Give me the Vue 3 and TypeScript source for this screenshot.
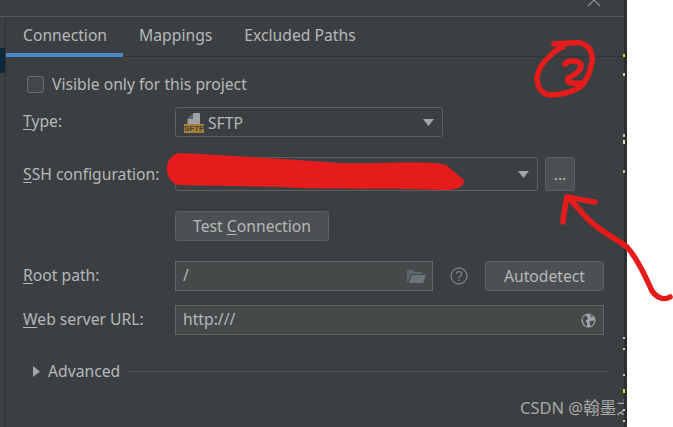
<script setup lang="ts">
const tabs: string[] = ['Connection', 'Mappings', 'Excluded Paths']
const edgeDots: { y: number; h: number; color: string }[] = [
  { y: 54, h: 3, color: '#d8d820' },
  { y: 73, h: 3, color: '#d4d4a0' },
  { y: 134, h: 3, color: '#c8c8a0' },
  { y: 140, h: 4, color: '#dcdcb0' },
  { y: 170, h: 3, color: '#c8c8a0' },
  { y: 337, h: 2, color: '#c8c8a0' },
  { y: 348, h: 2, color: '#d4d4a0' },
  { y: 374, h: 2, color: '#c8c8a0' },
  { y: 389, h: 4, color: '#d8d840' },
  { y: 409, h: 2, color: '#d4d4a0' },
  { y: 420, h: 2, color: '#d4d4a0' },
]
</script>

<template>
  <div class="page">
    <div class="dialog">
      <div class="titlebar">
        <svg class="close" width="14" height="8" viewBox="0 0 14 8">
          <path d="M1 -6 L13 6 M13 -6 L1 6" stroke="#8f9193" stroke-width="1.2" fill="none" />
        </svg>
      </div>
      <div class="main">
        <div class="strip"><div class="strip-sel"></div></div>
        <div class="panel">
          <div class="tabs">
            <div v-for="(t, i) in tabs" :key="t" class="tab" :class="{ active: i === 0 }">{{ t }}</div>
          </div>
          <div class="form">
            <label class="check"><span class="box"></span>Visible only for this project</label>

            <div class="row row-type">
              <div class="label"><u>T</u>ype:</div>
              <div class="combo combo-type">
                <svg class="sftp-doc" width="13" height="11" viewBox="0 0 13 11">
                  <path d="M0.5 11 V6 L7 0 H13 V11 Z" fill="#9ea2a6" />
                  <path d="M1 6 L6 1 V6 Z" fill="#5f6265" />
                </svg>
                <span class="sftp-tag">SFTP</span>
                <span class="combo-text">SFTP</span>
                <svg class="caret" width="11" height="7" viewBox="0 0 11 7"><path d="M0 0 H11 L5.5 7 Z" fill="#a3a5a7" /></svg>
              </div>
            </div>

            <div class="row row-ssh">
              <div class="label label-ssh"><u>S</u>SH configuration:</div>
              <div class="combo combo-ssh">
                <svg class="caret" width="11" height="7" viewBox="0 0 11 7"><path d="M0 0 H11 L5.5 7 Z" fill="#a3a5a7" /></svg>
              </div>
              <button class="btn dots">...</button>
            </div>

            <div class="row row-test">
              <button class="btn test">Test <u>C</u>onnection</button>
            </div>

            <div class="row row-root">
              <div class="label"><u>R</u>oot path:</div>
              <div class="input input-root">
                <span class="value">/</span>
                <svg width="20" height="16" viewBox="0 0 20 16">
                  <path d="M1 14 V2 H7 L9 4 H16 V6 H5 L2 14 Z" fill="#5f6a70" />
                  <path d="M3 15 L6 7 H20 L17 15 Z" fill="#6f7a80" />
                </svg>
              </div>
              <svg class="help" width="18" height="18" viewBox="0 0 18 18">
                <circle cx="9" cy="9" r="8" fill="none" stroke="#7c7f82" stroke-width="1.3" />
                <path d="M6.3 7 C6.3 3.8 11.8 3.8 11.8 7 C11.8 9 9 9 9 11" fill="none" stroke="#7c7f82" stroke-width="1.4" />
                <rect x="8.2" y="12.3" width="1.6" height="1.7" fill="#7c7f82" />
              </svg>
              <button class="btn auto">Autodetect</button>
            </div>

            <div class="row row-web">
              <div class="label"><u>W</u>eb server URL:</div>
              <div class="input input-web">
                <span class="value">http:///</span>
                <svg width="15" height="15" viewBox="0 0 15 15">
                  <circle cx="7.5" cy="7.5" r="7" fill="#a3a6a8" />
                  <path d="M1.5 5 L5 2 L7 5.5 L4.5 8 L6.5 11 L5.5 13.5 L2.5 10.5 Z M8.5 8 L13.5 7.5 L12 11.5 L9.5 13.5 Z M9 1 L12.5 3 L10.5 4.5 Z" fill="#46494b" />
                </svg>
              </div>
            </div>

            <div class="advanced">
              <svg width="7" height="11" viewBox="0 0 7 11"><path d="M0 0 L7 5.5 L0 11 Z" fill="#a3a5a7" /></svg>
              <span class="adv-text">Advanced</span>
              <span class="adv-line"></span>
            </div>
          </div>
        </div>
      </div>
      <div class="watermark">CSDN @翰墨之</div>
    </div>
    <div class="edge">
      <span
        v-for="d in edgeDots"
        :key="d.y"
        class="edge-dot"
        :style="{ top: d.y + 'px', height: d.h + 'px', background: d.color }"
      ></span>
    </div>

    <svg class="ink" width="673" height="427" viewBox="0 0 673 427">
      <path d="M180 153 C220 155 300 160 340 163 C380 164 430 160 446 165 L464 180 C464 188 455 190 445 190 C400 188 330 190 280 187 C240 186 200 186 180 185 C163 183 162 155 180 153 Z" fill="#e61c1c" />
      <g fill="none" stroke="#e61c1c" stroke-width="5.5" stroke-linecap="round" stroke-linejoin="round">
        <path d="M554 44 C565 43 575 42 581 43 C590 46 593 53 592 62 C590 72 586 82 580 87 C572 92 560 95 550 95 C541 94 537 86 537 77 C539 67 545 60 551 55 C556 50 560 48 563 47" />
        <path d="M565 64 C568 60 577 60 581 64 C582 70 577 74 568 78 C566 82 570 84 580 83" />
        <path d="M595 202 C585 201 575 198 567 197 C565 205 564 214 563 222" />
        <path d="M567 197 C575 203 580 212 590 221 C600 231 615 238 627 247 C637 258 645 275 652 291 C658 299 665 300 670 297" />
      </g>
    </svg>
  </div>
</template>

<style>
html, body { margin: 0; background: #fff; }
</style>

<style scoped>
.page {
  position: relative;
  display: flex;
  width: 673px;
  height: 427px;
  overflow: hidden;
  background: #fff;
  font-family: "Noto Sans", "Noto Sans CJK SC", sans-serif;
  font-size: 15.7px;
  color: #b4b8bb;
}
.dialog {
  position: relative;
  display: flex;
  flex-direction: column;
  width: 624px;
  background: #3c3f41;
}
.edge { position: relative; width: 3px; background: #2d2e2f; }
.edge-dot { position: absolute; left: -1px; width: 2px; }
.titlebar {
  position: relative;
  height: 16px;
  border-bottom: 1px solid #555759;
  flex: none;
}
.close { position: absolute; left: 587px; top: 0; }
.main { display: flex; flex: 1; min-height: 0; }
.strip { width: 5px; border-right: 1px solid #323232; flex: none; }
.strip-sel { width: 5px; height: 25px; margin-top: 31px; background: #0d293e; }
.panel { flex: 1; min-width: 0; }
.tabs {
  display: flex;
  box-sizing: border-box;
  height: 40px;
  border-bottom: 1px solid #323232;
}
.tab {
  padding: 8px 16px 0;
  height: 39px;
  box-sizing: border-box;
  line-height: 20px;
  white-space: nowrap;
}
.tab.active { padding-left: 17px; border-bottom: 4px solid #4a88c7; height: 40px; }
.form { padding: 0 20px 0 17px; }
.check { display: flex; align-items: center; height: 18px; margin-top: 18px; padding-left: 4px; white-space: nowrap; }
.box {
  width: 15px;
  height: 15px;
  margin-right: 8px;
  border: 1px solid #6b6b6b;
  border-radius: 2px;
  background: #43494a;
  flex: none;
}
.row { display: flex; align-items: center; }
.label { width: 152px; flex: none; white-space: nowrap; padding-bottom: 2px; }
.label-ssh { padding-bottom: 0; }
.value { padding-bottom: 2px; }
u { text-underline-offset: 2px; text-decoration-thickness: 1px; }
.row-type { margin-top: 14px; height: 30px; }
.row-ssh { margin-top: 20px; height: 34px; }
.row-test { margin-top: 20px; height: 30px; padding-left: 152px; }
.row-root { margin-top: 20px; height: 30px; }
.row-web { margin-top: 14px; height: 30px; }
.combo {
  position: relative;
  display: flex;
  align-items: center;
  box-sizing: border-box;
  height: 100%;
  border: 1px solid #5e6060;
  border-radius: 3px;
}
.combo-type { width: 268px; padding-left: 8px; }
.combo-ssh { width: 363px; }
.caret { position: absolute; right: 8px; top: 50%; margin-top: -3px; }
.sftp-doc { position: absolute; left: 11px; top: 5px; }
.sftp-tag {
  position: absolute;
  left: 8px;
  top: 16px;
  width: 20px;
  height: 9px;
  background: #a87f35;
  color: #3c3f41;
  font: bold 8px/9px "Liberation Sans", sans-serif;
  text-align: center;
  overflow: hidden;
}
.combo-text { margin-left: 24px; padding-top: 1px; }
.btn {
  box-sizing: border-box;
  height: 100%;
  padding: 0;
  border: 1px solid #5e6060;
  border-radius: 3px;
  background: #4c5052;
  color: #b4b8bb;
  font: inherit;
}
.dots { width: 30px; margin-left: 7px; line-height: 30px; }
.test { width: 154px; }
.auto { width: 119px; margin-left: 17px; }
.input {
  display: flex;
  align-items: center;
  justify-content: space-between;
  box-sizing: border-box;
  height: 100%;
  padding: 0 7px;
  border: 1px solid #646464;
  background: #45494a;
}
.input-root { width: 258px; padding-right: 6px; }
.input-root svg { opacity: 0.9; }
.input-web { width: 429px; }
.help { margin-left: 17px; }
.advanced { display: flex; align-items: center; height: 20px; margin-top: 26px; padding-left: 10px; }
.adv-text { margin-left: 8px; white-space: nowrap; }
.adv-line { flex: 1; height: 1px; margin-left: 7px; margin-right: -4px; background: #515355; }
.watermark {
  position: absolute;
  left: 520px;
  top: 398px;
  width: 107px;
  overflow: hidden;
  white-space: nowrap;
  font-size: 16.5px;
  line-height: 20px;
  color: #a7a9aa;
}
.ink { position: absolute; left: 0; top: 0; pointer-events: none; }
</style>
